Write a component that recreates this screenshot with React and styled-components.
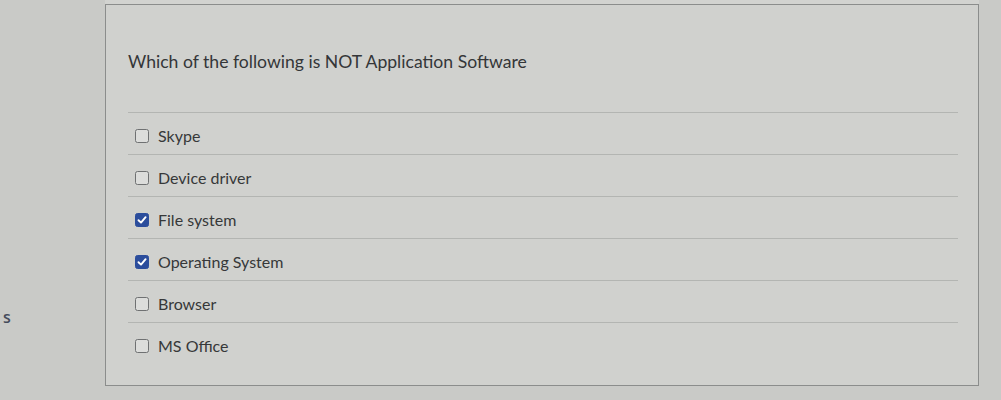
import React from "react";
import styled, { createGlobalStyle } from "styled-components";

const Global = createGlobalStyle`
  html, body { margin: 0; padding: 0; }
  body {
    background: #c9cac7;
    font-family: Lato, "Liberation Sans", sans-serif;
    width: 1001px;
    height: 400px;
    overflow: hidden;
  }
`;

const Page = styled.div`
  display: flex;
  flex-direction: column;
  width: 1001px;
  height: 400px;
`;

const TopStrip = styled.div`
  height: 4px;
  background: #d2d3d0;
  margin-left: 105px;
  margin-right: 22px;
`;

const Body = styled.div`
  display: flex;
  flex: 1;
`;

const Sidebar = styled.div`
  width: 105px;
  flex-shrink: 0;
  padding-top: 302px;
  padding-left: 3px;
  box-sizing: border-box;
  color: #454c5c;
  font-size: 16px;
  font-weight: 600;
  font-family: "Open Sans", sans-serif;
`;

const Panel = styled.div`
  width: 874px;
  height: 382px;
  box-sizing: border-box;
  border: 1.5px solid #8b8d8c;
  background: #d0d1ce;
  padding: 46px 20px 20px 22px;
  display: flex;
  flex-direction: column;
`;

const Question = styled.div`
  font-size: 17.6px;
  line-height: 22px;
  color: #343638;
  margin-bottom: 39px;
`;

const Options = styled.div`
  display: flex;
  flex-direction: column;
`;

const Row = styled.label`
  display: flex;
  align-items: center;
  gap: 9px;
  height: 42px;
  padding: 4px 0 0 7px;
  box-sizing: border-box;
  border-top: 1px solid #b3b5b2;
  font-size: 16px;
  color: #363839;
`;

const Box = styled.span`
  width: 14px;
  height: 14px;
  box-sizing: border-box;
  border-radius: 2.5px;
  border: 1.5px solid ${(p) => (p.checked ? "#2b4d9c" : "#6f7172")};
  background: ${(p) => (p.checked ? "#2b4d9c" : "#dcdddb")};
  display: flex;
  align-items: center;
  justify-content: center;
`;

const options = [
  { label: "Skype", checked: false },
  { label: "Device driver", checked: false },
  { label: "File system", checked: true },
  { label: "Operating System", checked: true },
  { label: "Browser", checked: false },
  { label: "MS Office", checked: false },
];

export default function App() {
  return (
    <>
      <Global />
      <Page>
        <TopStrip />
        <Body>
          <Sidebar>s</Sidebar>
          <Panel>
            <Question>Which of the following is NOT Application Software</Question>
            <Options>
              {options.map((o) => (
                <Row key={o.label}>
                  <Box checked={o.checked}>
                    {o.checked && (
                      <svg width="10" height="10" viewBox="0 0 10 10">
                        <path d="M1.5 5.2 L4 7.6 L8.6 2.2" fill="none" stroke="#fff" strokeWidth="1.9" strokeLinecap="round" strokeLinejoin="round" />
                      </svg>
                    )}
                  </Box>
                  {o.label}
                </Row>
              ))}
            </Options>
          </Panel>
        </Body>
      </Page>
    </>
  );
}
